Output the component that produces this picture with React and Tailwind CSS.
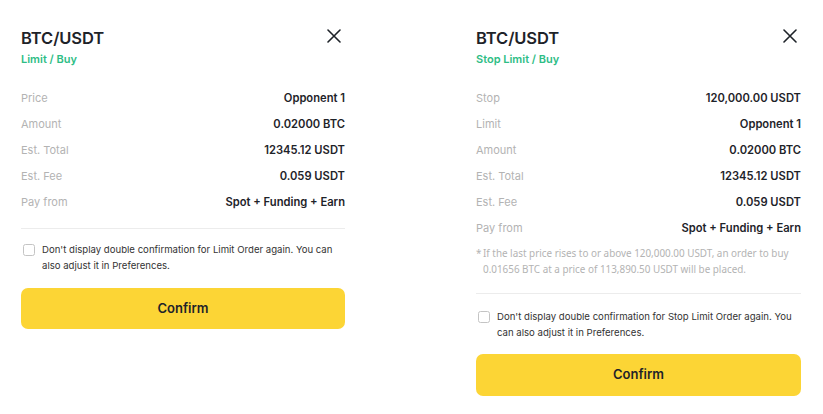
import React from "react";

function CloseIcon() {
  return (
    <svg width="14" height="14" viewBox="0 0 14 14" fill="none">
      <path d="M1 1L13 13M13 1L1 13" stroke="#1e2329" strokeWidth="1.6" strokeLinecap="round" />
    </svg>
  );
}

function Row({ label, value }) {
  return (
    <div className="flex h-[26px] items-center justify-between text-[11px]">
      <span className="text-[#b3b3b3]">{label}</span>
      <span className="text-[11.2px] font-semibold text-[#1e2329]">{value}</span>
    </div>
  );
}

function Panel({ subtitle, rows, note, orderName, width, noteGap, checkGap, btnGap, btnH, checkLh }) {
  return (
    <div className={`flex flex-col pt-[27px] ${width}`}>
      <div className="flex items-start justify-between">
        <div className="text-[16.5px] leading-[22px] font-semibold text-[#1e2329] tracking-[-0.1px]">BTC/USDT</div>
        <div className="mt-[2px] mr-[4px]">
          <CloseIcon />
        </div>
      </div>
      <div className="mt-[2px] text-[11px] leading-[16px] font-semibold text-[#2ebd85]">{subtitle}</div>
      <div className="mt-[18px] flex flex-col">
        {rows.map((r) => (
          <Row key={r[0]} label={r[0]} value={r[1]} />
        ))}
      </div>
      {note && (
        <div className="mt-[4px] flex text-[9.9px] leading-[16px] text-[#b3b3b3] font-['Noto_Sans',sans-serif]">
          <span className="w-[7px] shrink-0">*</span>
          <span>{note}</span>
        </div>
      )}
      <div className={`h-px bg-[#ececec] ${noteGap}`} />
      <div className={`flex items-start ${checkGap}`}>
        <div className="mt-[2px] ml-[2px] h-[12px] w-[12px] shrink-0 rounded-[2.5px] border border-[#c4c4c4]" />
        <div className={`ml-[7px] text-[9.6px] text-[#333] ${checkLh}`}>
          Don't display double confirmation for {orderName} Order again. You can also adjust it in Preferences.
        </div>
      </div>
      <button className={`${btnGap} ${btnH} w-full rounded-[7px] bg-[#fcd535] text-[13px] font-semibold text-[#1e2329]`}>
        Confirm
      </button>
    </div>
  );
}

export default function App() {
  return (
    <div className="flex h-[414px] w-[823px] bg-white font-['Inter',sans-serif]">
      <div className="ml-[21px]">
        <Panel
          width="w-[324px]"
          subtitle="Limit / Buy"
          orderName="Limit"
          rows={[
            ["Price", "Opponent 1"],
            ["Amount", "0.02000 BTC"],
            ["Est. Total", "12345.12 USDT"],
            ["Est. Fee", "0.059 USDT"],
            ["Pay from", "Spot + Funding + Earn"],
          ]}
          noteGap="mt-[13px]"
          checkGap="mt-[13px]"
          checkLh="leading-[16px]"
          btnGap="mt-[14px]"
          btnH="h-[41px]"
        />
      </div>
      <div className="ml-[131px]">
        <Panel
          width="w-[325px]"
          subtitle="Stop Limit / Buy"
          orderName="Stop Limit"
          rows={[
            ["Stop", "120,000.00 USDT"],
            ["Limit", "Opponent 1"],
            ["Amount", "0.02000 BTC"],
            ["Est. Total", "12345.12 USDT"],
            ["Est. Fee", "0.059 USDT"],
            ["Pay from", "Spot + Funding + Earn"],
          ]}
          note="If the last price rises to or above 120,000.00 USDT, an order to buy 0.01656 BTC at a price of 113,890.50 USDT will be placed."
          noteGap="mt-[16px]"
          checkGap="mt-[15px]"
          checkLh="leading-[16px]"
          btnGap="mt-[13px]"
          btnH="h-[42px]"
        />
      </div>
    </div>
  );
}
